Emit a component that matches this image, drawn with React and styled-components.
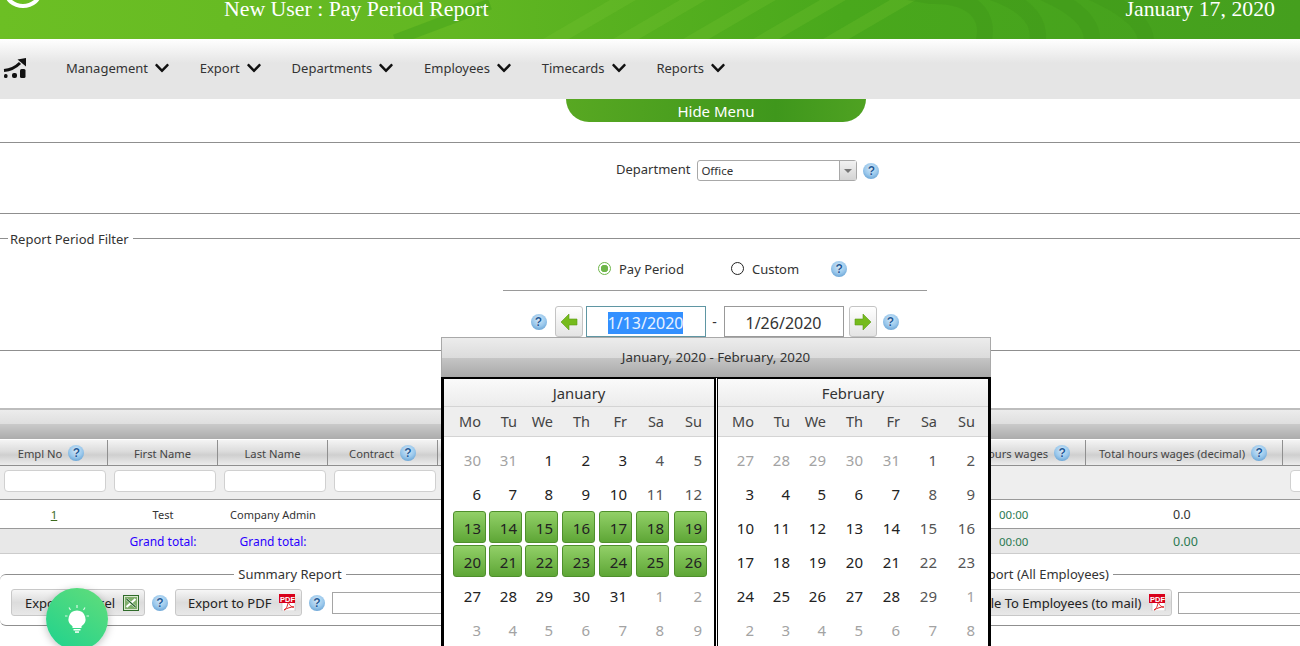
import React from "react";
import styled, { createGlobalStyle } from "styled-components";
import { FaChevronDown } from "react-icons/fa";

const Global = createGlobalStyle`
  html, body { margin: 0; padding: 0; background: #fff; }
  body { font-family: "Noto Sans", "Liberation Sans", sans-serif; color: #333; }
  * { box-sizing: border-box; }
`;

const Page = styled.div`
  position: relative;
  width: 1300px;
  height: 646px;
  overflow: hidden;
`;

const Header = styled.header`
  position: relative;
  height: 39px;
  overflow: hidden;
  background: linear-gradient(90deg, #6cbf24 0%, #62b722 35%, #49a81c 65%, #459f1e 100%);
  font-family: "Liberation Serif", serif;
  color: #fff;
`;
const Pattern = styled.svg`
  position: absolute;
  left: 0;
  top: 0;
`;
const HeaderRow = styled.div`
  position: relative;
  display: flex;
  justify-content: space-between;
  padding: 0 25px 0 224px;
  font-size: 21.8px;
  line-height: 19px;
`;
const Logo = styled.div`
  position: absolute;
  left: 4px;
  top: -25px;
  width: 38px;
  height: 33px;
  border: 4px solid #fff;
  border-radius: 50%;
`;

const Nav = styled.nav`
  display: flex;
  align-items: center;
  height: 60px;
  padding: 0 0 2px 3px;
  background: linear-gradient(#fff 0, #e5e5e5 24px, #e5e5e5 100%);
`;
const NavLogo = styled.svg`
  margin-right: 39px;
  margin-top: 1px;
`;
const NavItem = styled.div`
  display: flex;
  align-items: center;
  gap: 6px;
  margin-right: 29.8px;
  font-size: 13px;
  color: #333;
  svg { color: #111; font-size: 16px; }
`;

const HideTab = styled.div`
  width: 300px;
  height: 23px;
  margin: 0 0 20px 566px;
  border-radius: 0 0 24px 24px;
  background: linear-gradient(90deg, #58a822, #3f971c 70%, #4fa222);
  color: #fff;
  font-size: 15px;
  line-height: 25px;
  text-align: center;
`;

const DeptSection = styled.section`
  display: flex;
  align-items: center;
  height: 72px;
  padding: 0 0 15px 616px;
  border-top: 1px solid #8f8f8f;
  border-bottom: 1px solid #8f8f8f;
  font-size: 13px;
`;
const DeptLabel = styled.span`
  margin-right: 7px;
  margin-top: -4px;
`;
const Select = styled.div`
  display: flex;
  justify-content: space-between;
  width: 160px;
  height: 21px;
  margin-right: 6px;
  padding-left: 3px;
  border: 1px solid #a8a8a8;
  border-radius: 3px;
  font-size: 11.5px;
  line-height: 20px;
`;
const SelectArrow = styled.div`
  display: flex;
  align-items: center;
  justify-content: center;
  width: 17px;
  border-left: 1px solid #a8a8a8;
  background: linear-gradient(#f2f2f2, #d4d4d4);
  &::after {
    content: "";
    border-left: 4px solid transparent;
    border-right: 4px solid transparent;
    border-top: 4px solid #777;
  }
`;

const Help = styled.span`
  display: inline-flex;
  flex: none;
  align-items: center;
  justify-content: center;
  width: 16px;
  height: 16px;
  border-radius: 50%;
  background: radial-gradient(circle at 50% 35%, #cfe6f7 0%, #9ac8ec 50%, #4f90c8 100%);
  color: #1f5a96;
  font: bold 12px "Liberation Sans", sans-serif;
  text-shadow: 0 0 1px #fff;
`;

const PeriodSet = styled.fieldset`
  height: 123px;
  margin: 14px 0 0;
  padding: 0;
  border: 0;
  border-top: 1px solid #8f8f8f;
  border-bottom: 1px solid #8f8f8f;
`;
const PeriodLegend = styled.legend`
  margin-left: 8px;
  padding: 2px 4px 0 2px;
  font-size: 13px;
  line-height: 18px;
`;
const PeriodBody = styled.div`
  width: 424px;
  margin-left: 503px;
`;
const RadioRow = styled.div`
  display: flex;
  align-items: center;
  height: 43px;
  padding-left: 95px;
  border-bottom: 1px solid #9a9a9a;
  font-size: 13px;
`;
const Radio = styled.span`
  width: 13px;
  height: 13px;
  margin-right: 8px;
  margin-top: -2px;
  border-radius: 50%;
  border: 1px solid ${(p) => (p.$on ? "#6fb64a" : "#222")};
  background: ${(p) => (p.$on ? "radial-gradient(circle, #6fb64a 0 3.5px, #fff 4px)" : "#fff")};
`;
const RadioLabel = styled.span`
  margin-right: ${(p) => p.$gap}px;
`;
const DateRow = styled.div`
  display: flex;
  align-items: center;
  justify-content: center;
  margin: 15px 0 0 -1px;
`;
const ArrowBtn = styled.div`
  display: flex;
  align-items: center;
  justify-content: center;
  width: 28px;
  height: 31px;
  margin: 0 ${(p) => p.$right}px 0 ${(p) => p.$left}px;
  border: 1px solid #c4c4c4;
  border-radius: 3px;
  background: linear-gradient(#fff, #e4e4e4);
`;
const DateField = styled.div`
  width: 120px;
  height: 31px;
  padding-top: 2px;
  border: 1px solid ${(p) => (p.$focus ? "#5f96a3" : "#999")};
  font-size: 16px;
  line-height: 29px;
  text-align: center;
  color: #333;
`;
const Selected = styled.span`
  display: inline-block;
  background: #3390ff;
  color: #eaf3ff;
  line-height: 22px;
`;
const Dash = styled.span`
  width: 18px;
  text-align: center;
  font-size: 14px;
`;

const TitleBar = styled.div`
  height: 31px;
  margin-top: 57px;
  border-top: 2px solid #bdbdbd;
  background: linear-gradient(#ececec 0, #dedede 50%, #c9c9c9 50%, #acacac 100%);
`;

const HeadRow = styled.div`
  display: flex;
  height: 26px;
  margin-top: 1px;
  border-bottom: 1px solid #8f8f8f;
  background: linear-gradient(#f4f4f4, #dcdcdc 45%, #cfcfcf 60%, #ececec);
`;
const HeadCell = styled.div`
  display: flex;
  align-items: center;
  justify-content: center;
  gap: 6px;
  flex: none;
  width: ${(p) => p.$w}px;
  padding: 1px ${(p) => p.$right || 0}px 0 ${(p) => p.$left || 0}px;
  border-right: 1px solid #8f8f8f;
  font-size: 11.2px;
  color: #444;
`;
const FilterRow = styled.div`
  display: flex;
  height: 34px;
  border-bottom: 1px solid #999;
  background: #eee;
`;
const FilterCell = styled.div`
  flex: none;
  width: ${(p) => p.$w}px;
  padding: 4px 4px 0;
`;
const FilterInput = styled.div`
  height: 22px;
  border: 1px solid #d0d0d0;
  border-radius: 4px;
  background: #fff;
`;
const Row = styled.div`
  display: flex;
  align-items: center;
  height: ${(p) => p.$h}px;
  border-bottom: 1px solid ${(p) => p.$line};
  background: ${(p) => p.$bg};
`;
const Cell = styled.div`
  flex: none;
  width: ${(p) => p.$w}px;
  padding-left: ${(p) => p.$left || 0}px;
  text-align: ${(p) => (p.$left ? "left" : "center")};
  font-size: ${(p) => p.$size || 11}px;
  color: ${(p) => p.$color || "#333"};
  text-decoration: ${(p) => (p.$link ? "underline" : "none")};
`;

const ExportGrid = styled.div`
  display: grid;
  grid-template-columns: 580px 580px;
  justify-content: space-between;
  margin-top: 11px;
`;
const ExportSet = styled.fieldset`
  min-width: 0;
  height: 61px;
  margin: 0;
  padding: 0;
  border: 0;
  border-top: 1px solid #8f8f8f;
  border-bottom: 1px solid #8f8f8f;
  border-radius: 6px 0 0 6px;
`;
const ExportLegend = styled.legend`
  margin: 0 auto;
  padding: 0 4px 0 ${(p) => p.$left || 4}px;
  font-size: 13px;
  line-height: 18px;
`;
const ExportRow = styled.div`
  display: flex;
  align-items: center;
  gap: ${(p) => p.$gap}px;
  margin: 6px 0 0 ${(p) => p.$left}px;
`;
const ExportBtn = styled.div`
  display: flex;
  align-items: center;
  justify-content: space-between;
  flex: none;
  width: ${(p) => p.$w}px;
  height: 27px;
  padding: 0 5px 0 ${(p) => p.$pad}px;
  border: 1px solid #c8c8c8;
  border-radius: 3px;
  background: linear-gradient(#f6f6f6, #dcdcdc 50%, #e8e8e8);
  font-size: 13px;
  color: #222;
  white-space: nowrap;
`;
const ExportInput = styled.div`
  flex: none;
  width: 130px;
  height: 22px;
  border: 1px solid #a5a5a5;
  background: #fff;
`;

const Bulb = styled.div`
  position: absolute;
  left: 46px;
  top: 588px;
  display: flex;
  align-items: center;
  justify-content: center;
  width: 62px;
  height: 62px;
  border-radius: 50%;
  background: linear-gradient(35deg, #1dd28e, #63dd7a);
  box-shadow: 0 2px 8px rgba(0, 0, 0, 0.25);
`;

const Calendar = styled.div`
  position: absolute;
  left: 441px;
  top: 337px;
  width: 550px;
  height: 320px;
  background: #fff;
`;
const CalTitle = styled.div`
  height: 40px;
  border: 1px solid #a9a9a9;
  border-bottom: 0;
  background: linear-gradient(#ececec 0, #dcdcdc 50%, #c6c6c6 50%, #a9a9a9 100%);
  font-size: 13.3px;
  line-height: 38px;
  text-align: center;
  color: #333;
`;
const Months = styled.div`
  display: flex;
  justify-content: space-between;
  border-top: 1px solid #000;
`;
const Month = styled.div`
  width: ${(p) => p.$w}px;
  height: 280px;
  border: solid #000;
  border-width: 1px ${(p) => p.$rw}px 0 ${(p) => p.$lw}px;
`;
const MonthName = styled.div`
  height: 28px;
  border-bottom: 1px solid #d4d4d4;
  background: linear-gradient(#fafafa, #ececec);
  font-size: 14.8px;
  line-height: 28px;
  text-align: center;
`;
const Week = styled.div`
  display: grid;
  grid-template-columns: 36px 36px 37px 37px 37px 38px 34px;
  padding-left: ${(p) => p.$pad}px;
`;
const WeekHead = styled(Week)`
  height: 30px;
  border-bottom: 1px solid #d4d4d4;
  background: #eee;
  font-size: 14.5px;
  line-height: 29px;
  color: #444;
  span { width: 33px; padding-right: 5px; text-align: right; }
`;
const Days = styled.div`
  padding-top: 6px;
`;
const dayColor = (p) => {
  if (p.$off) return "#a3a3a3";
  if (p.$weekend && !p.$sel) return "#555";
  return "#222";
};
const Day = styled.div`
  width: 33px;
  height: 32px;
  margin-bottom: 2px;
  padding-right: 4px;
  border: 1px solid ${(p) => (p.$sel ? "#4f8f2c" : "transparent")};
  border-radius: 3px;
  background: ${(p) => (p.$sel ? "linear-gradient(#92d068, #5ea636)" : "transparent")};
  color: ${dayColor};
  font-size: 15px;
  line-height: 32px;
  text-align: right;
`;

const heads = ["Mo", "Tu", "We", "Th", "Fr", "Sa", "Su"];

const buildCells = (prevDays, prevEnd, total) => {
  const cells = [];
  for (let d = prevDays; d > 0; d--) cells.push({ n: prevEnd - d + 1, off: true });
  for (let d = 1; d <= total; d++) cells.push({ n: d, off: false });
  let d = 1;
  while (cells.length < 42) cells.push({ n: d++, off: true });
  return cells;
};

const months = [
  { name: "January", cells: buildCells(2, 31, 31), sel: [13, 26], w: 275, lw: 3, rw: 2, pad: 9 },
  { name: "February", cells: buildCells(5, 31, 29), sel: null, w: 274, lw: 1, rw: 3, pad: 8 },
];

const Question = () => <Help>?</Help>;

const Arrow = ({ flip }) => (
  <svg width="18" height="18" viewBox="0 0 18 18" style={flip ? { transform: "scaleX(-1)" } : undefined}>
    <path d="M1 6h8V1l8 8-8 8v-5H1z" fill="#76bb1c" stroke="#5a9a14" strokeWidth="0.6" />
  </svg>
);

const PdfIcon = () => (
  <svg width="17" height="17" viewBox="0 0 17 17">
    <path d="M3 6h13v11H3z" fill="#fff" stroke="#bbb" strokeWidth="0.6" />
    <path d="M5 16c3-1 4-6 4-9 1 4 3 6 6 6-3 0-7 1-10 3z" fill="none" stroke="#d22" />
    <rect x="0" y="0" width="16" height="9" fill="#d8001a" />
    <text x="1" y="7.500" fontSize="7.500" fontWeight="bold" fill="#fff" fontFamily="Liberation Sans">PDF</text>
  </svg>
);

const ExcelIcon = () => (
  <svg width="16" height="16" viewBox="0 0 16 16">
    <rect x="0.5" y="0.5" width="15" height="15" fill="#dbe9d0" stroke="#2f6b2a" />
    <rect x="2" y="2" width="12" height="12" fill="#7fae6b" />
    <path d="M3.5 4l9 8M12.5 4l-9 8" stroke="#fff" strokeWidth="2.2" />
    <path d="M3.5 4l9 8" stroke="#1d5c22" strokeWidth="1.2" />
  </svg>
);

// fingerprint-like bands behind the header text
const Waves = () => (
  <Pattern width={1300} height={39} viewBox="0 0 1300 39" fill="none">
    {[0, 1, 2, 3, 4].map((i) => (
      <path key={i} d={`M${520 + i * 70} 60 L${640 + i * 70} -10`} stroke="#7ec838" strokeOpacity="0.22" strokeWidth="13" />
    ))}
    {[0, 1, 2, 3].map((i) => (
      <path
        key={i}
        d={`M${975 + i * 55} 60 C${1000 + i * 55} 20 ${975 + i * 45} -6 ${930 + i * 20} ${-4 - i * 14} L840 -20`}
        stroke="#3f961a"
        strokeOpacity="0.4"
        strokeWidth="16"
      />
    ))}
    <path d="M395 40 L490 4" stroke="#4da81c" strokeOpacity="0.7" strokeWidth="11" />
  </Pattern>
);

const navItems = ["Management", "Export", "Departments", "Employees", "Timecards", "Reports"];

export default function App() {
  return (
    <Page>
      <Global />
      <Header>
        <Waves />
        <Logo />
        <HeaderRow>
          <span>New User : Pay Period Report</span>
          <span>January 17, 2020</span>
        </HeaderRow>
      </Header>

      <Nav>
        <NavLogo width="24" height="21" viewBox="0 0 24 21">
          <rect x="1" y="16" width="3.500" height="4" rx="1.500" fill="#111" />
          <rect x="9" y="15" width="5" height="5" rx="2" fill="#111" />
          <rect x="17" y="11" width="5.500" height="9" rx="1.500" fill="#111" />
          <path d="M1 12.500C7 12 12 10 17 5" stroke="#111" strokeWidth="3" fill="none" />
          <path d="M14.500 1.500L23 0v8.500z" fill="#111" />
        </NavLogo>
        {navItems.map((item) => (
          <NavItem key={item}>
            {item} <FaChevronDown />
          </NavItem>
        ))}
      </Nav>

      <HideTab>Hide Menu</HideTab>

      <DeptSection>
        <DeptLabel>Department</DeptLabel>
        <Select>
          Office
          <SelectArrow />
        </Select>
        <Question />
      </DeptSection>

      <PeriodSet>
        <PeriodLegend>Report Period Filter</PeriodLegend>
        <PeriodBody>
          <RadioRow>
            <Radio $on />
            <RadioLabel $gap={47}>Pay Period</RadioLabel>
            <Radio />
            <RadioLabel $gap={32}>Custom</RadioLabel>
            <Question />
          </RadioRow>
          <DateRow>
            <Question />
            <ArrowBtn $left={8} $right={3}>
              <Arrow flip />
            </ArrowBtn>
            <DateField $focus>
              <Selected>1/13/2020</Selected>
            </DateField>
            <Dash>-</Dash>
            <DateField>1/26/2020</DateField>
            <ArrowBtn $left={5} $right={6}>
              <Arrow />
            </ArrowBtn>
            <Question />
          </DateRow>
        </PeriodBody>
      </PeriodSet>

      <TitleBar />
      <HeadRow>
        <HeadCell $w={108} $right={5}>Empl No <Question /></HeadCell>
        <HeadCell $w={110}>First Name</HeadCell>
        <HeadCell $w={110}>Last Name</HeadCell>
        <HeadCell $w={110}>Contract <Question /></HeadCell>
        <HeadCell $w={497} />
        <HeadCell $w={151} $left={3}>Total hours wages <Question /></HeadCell>
        <HeadCell $w={197} $right={2}>Total hours wages (decimal) <Question /></HeadCell>
      </HeadRow>
      <FilterRow>
        <FilterCell $w={110}><FilterInput /></FilterCell>
        <FilterCell $w={110}><FilterInput /></FilterCell>
        <FilterCell $w={110}><FilterInput /></FilterCell>
        <FilterCell $w={110}><FilterInput /></FilterCell>
        <FilterCell $w={846} />
        <FilterCell $w={40}><FilterInput /></FilterCell>
      </FilterRow>
      <Row $h={29} $bg="#fff" $line="#999">
        <Cell $w={108} $size={11.5} $link $color="#3d6b1d">1</Cell>
        <Cell $w={110}>Test</Cell>
        <Cell $w={110}>Company Admin</Cell>
        <Cell $w={110} />
        <Cell $w={497} />
        <Cell $w={151} $left={64} $size={11.5} $color="#2b7a52">00:00</Cell>
        <Cell $w={197} $left={87} $size={12.5}>0.0</Cell>
      </Row>
      <Row $h={25} $bg="#e8e8e8" $line="#ccc">
        <Cell $w={108} />
        <Cell $w={110} $size={12} $color="#2a00ff">Grand total:</Cell>
        <Cell $w={110} $size={12} $color="#2a00ff">Grand total:</Cell>
        <Cell $w={110} />
        <Cell $w={497} />
        <Cell $w={151} $left={64} $size={11.5} $color="#2b7a52">00:00</Cell>
        <Cell $w={197} $left={87} $size={12.5} $color="#2b7a52">0.00</Cell>
      </Row>

      <ExportGrid>
        <ExportSet>
          <ExportLegend>Summary Report</ExportLegend>
          <ExportRow $left={11} $gap={7}>
            <ExportBtn $w={134} $pad={13}>Export to Excel <ExcelIcon /></ExportBtn>
            <Question />
            <ExportBtn $w={127} $pad={12}>Export to PDF <PdfIcon /></ExportBtn>
            <Question />
            <ExportInput />
          </ExportRow>
        </ExportSet>
        <ExportSet>
          <ExportLegend $left={11}>Detailed Report (All Employees)</ExportLegend>
          <ExportRow $left={170} $gap={6}>
            <ExportBtn $w={282} $pad={21}>Send Schedule To Employees (to mail) <PdfIcon /></ExportBtn>
            <ExportInput />
          </ExportRow>
        </ExportSet>
      </ExportGrid>

      <Bulb>
        <svg width="24" height="28" viewBox="0 0 24 28">
          <path d="M12 5.500a8.500 8.500 0 0 0-4.500 15.700V23h9v-1.800A8.500 8.500 0 0 0 12 5.500z" fill="#fff" />
          <rect x="8.500" y="24" width="7" height="1.500" fill="#fff" />
          <rect x="10" y="26.300" width="4" height="1.500" fill="#fff" />
          <path d="M12 0v3M4 2.500l1.500 2.500M20 2.500L18.500 5M0 11h2.500M21.500 11H24" stroke="#d9f8e4" strokeWidth="1.200" />
        </svg>
      </Bulb>

      <Calendar>
        <CalTitle>January, 2020 - February, 2020</CalTitle>
        <Months>
          {months.map((m) => (
            <Month key={m.name} $w={m.w} $lw={m.lw} $rw={m.rw}>
              <MonthName>{m.name}</MonthName>
              <WeekHead $pad={m.pad}>
                {heads.map((h) => (
                  <span key={h}>{h}</span>
                ))}
              </WeekHead>
              <Days>
                <Week $pad={m.pad}>
                  {m.cells.map((c, i) => (
                    <Day
                      key={i}
                      $off={c.off}
                      $weekend={i % 7 >= 5}
                      $sel={m.sel && !c.off && c.n >= m.sel[0] && c.n <= m.sel[1]}
                    >
                      {c.n}
                    </Day>
                  ))}
                </Week>
              </Days>
            </Month>
          ))}
        </Months>
      </Calendar>
    </Page>
  );
}
